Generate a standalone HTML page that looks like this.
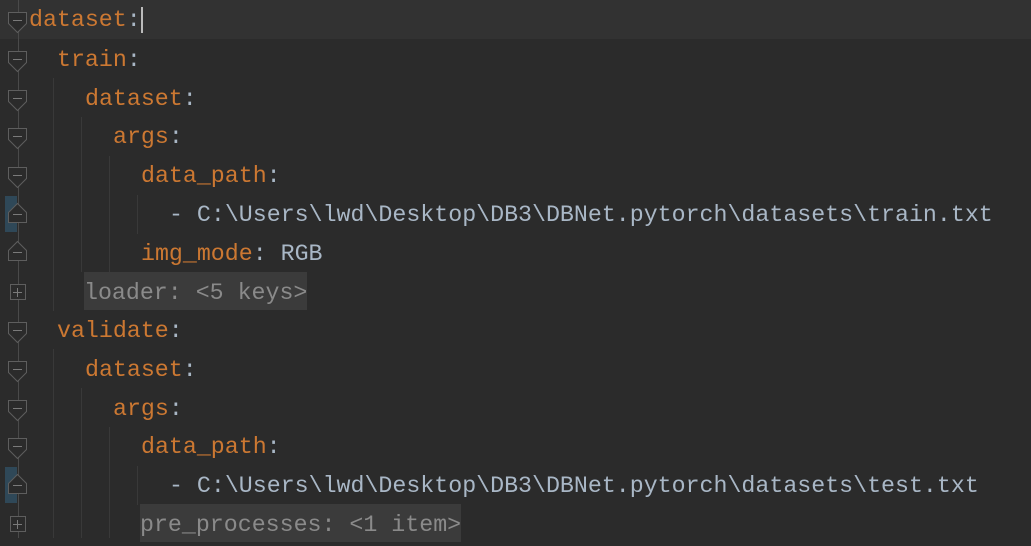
<!DOCTYPE html>
<html><head><style>
body{margin:0;width:1031px;height:538px;background:#2b2b2b;overflow:hidden;position:relative;font-family:"Liberation Mono",monospace;font-size:23.28px}
.cur{position:absolute;left:0;top:0;width:1031px;height:39px;background:#323232}
.l{position:absolute;height:38.7px;line-height:38.7px;white-space:pre;color:#a9b7c6}
.k{color:#cc7832}
.f{background:#3b3b3b;color:#8a8a8a}
.g{position:absolute;width:1px;background:#393939}
.gl{position:absolute;left:18px;top:0;width:1px;height:538px;background:#4a4a4a}
svg{position:absolute}
.hl{position:absolute;left:5px;width:12px;height:36px;background:#2f4858}
</style></head><body>
<div class="cur"></div>
<div class="gl"></div>
<div class="hl" style="top:196px"></div>
<div class="hl" style="top:467px"></div>
<div class="g" style="left:53px;top:78px;height:233px"></div>
<div class="g" style="left:81px;top:117px;height:155px"></div>
<div class="g" style="left:109px;top:156px;height:116px"></div>
<div class="g" style="left:137px;top:195px;height:39px"></div>
<div class="g" style="left:53px;top:349px;height:189px"></div>
<div class="g" style="left:81px;top:388px;height:150px"></div>
<div class="g" style="left:109px;top:427px;height:111px"></div>
<div class="g" style="left:137px;top:466px;height:39px"></div>
<div class="l k" style="left:29px;top:1px">dataset<span style="color:#a9b7c6">:</span><span style="display:inline-block;width:2px;height:26px;background:#bbb;vertical-align:middle"></span></div>
<div class="l k" style="left:57px;top:41px">train<span style="color:#a9b7c6">:</span></div>
<div class="l k" style="left:85px;top:80px">dataset<span style="color:#a9b7c6">:</span></div>
<div class="l k" style="left:113px;top:118px">args<span style="color:#a9b7c6">:</span></div>
<div class="l k" style="left:141px;top:157px">data_path<span style="color:#a9b7c6">:</span></div>
<div class="l" style="left:169px;top:196px">- C:\Users\lwd\Desktop\DB3\DBNet.pytorch\datasets\train.txt</div>
<div class="l" style="left:141px;top:235px"><span class="k">img_mode</span>: RGB</div>
<div class="l f" style="left:84px;top:272px;line-height:42px;height:38px">loader: &lt;5 keys&gt;</div>
<div class="l k" style="left:57px;top:312px">validate<span style="color:#a9b7c6">:</span></div>
<div class="l k" style="left:85px;top:351px">dataset<span style="color:#a9b7c6">:</span></div>
<div class="l k" style="left:113px;top:390px">args<span style="color:#a9b7c6">:</span></div>
<div class="l k" style="left:141px;top:428px">data_path<span style="color:#a9b7c6">:</span></div>
<div class="l" style="left:169px;top:467px">- C:\Users\lwd\Desktop\DB3\DBNet.pytorch\datasets\test.txt</div>
<div class="l f" style="left:140px;top:504px;line-height:42px;height:38px">pre_processes: &lt;1 item&gt;</div>
<svg style="top:0;left:0" width="30" height="538">
<defs><path id="d" d="M8.5 12.5h18v11l-9 9l-9-9z"/><path id="u" d="M8.5 222.5v-10l9-9l9 9v10z"/></defs>
<g fill="#2b2b2b" stroke="#5e5e5e" stroke-width="1">
<use href="#d"/><use href="#d" y="39"/><use href="#d" y="78"/><use href="#d" y="116"/><use href="#d" y="155"/>
<use href="#d" y="310"/><use href="#d" y="349"/><use href="#d" y="388"/><use href="#d" y="426"/>
<use href="#u"/><use href="#u" y="38"/><use href="#u" y="271"/>
<rect x="10.5" y="284.5" width="15" height="15"/>
<rect x="10.5" y="516.5" width="15" height="15"/>
</g>
<g stroke="#7a7a7a" stroke-width="1">
<path d="M13 20.5h9M13 59.5h9M13 98.5h9M13 136.5h9M13 175.5h9M13 330.5h9M13 369.5h9M13 408.5h9M13 446.5h9"/>
<path d="M13 214.5h9M13 252.5h9M13 485.5h9"/>
<path d="M13 292.5h9M17.5 288v9M13 524.5h9M17.5 520v9"/>
</g>
</svg>
</body></html>
